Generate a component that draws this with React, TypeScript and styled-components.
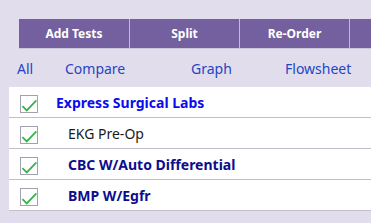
import React from "react";
import styled, { createGlobalStyle } from "styled-components";

const GlobalStyle = createGlobalStyle`
  html, body {
    margin: 0;
    padding: 0;
    background: #e2ddec;
    font-family: "Noto Sans", "Open Sans", sans-serif;
    overflow: hidden;
  }
`;

// last button runs off the edge, its label isn't visible
const actions = ["Add Tests", "Split", "Re-Order", ""];
const tabs = [
  { label: "All", width: 48 },
  { label: "Compare", width: 126 },
  { label: "Graph", width: 94 },
  { label: "Flowsheet", width: 100 },
];

type Item = { name: string; kind: "group" | "plain" | "panel" };

const items: Item[] = [
  { name: "Express Surgical Labs", kind: "group" },
  { name: "EKG Pre-Op", kind: "plain" },
  { name: "CBC W/Auto Differential", kind: "panel" },
  { name: "BMP W/Egfr", kind: "panel" },
];

const Check = () => (
  <CheckBox>
    <svg width="16" height="16" viewBox="0 0 16 16">
      <path
        d="M1.4 10.2 L5.8 14.4 L15.4 4.4"
        fill="none"
        stroke="#34b548"
        strokeWidth="1.8"
      />
    </svg>
  </CheckBox>
);

const App = () => {
  return (
    <Page>
      <GlobalStyle />
      <Toolbar>
        {actions.map((a, i) => (
          <ToolButton key={i}>{a}</ToolButton>
        ))}
      </Toolbar>
      <Tabs>
        {tabs.map((t) => (
          <Tab key={t.label} $width={t.width}>
            {t.label}
          </Tab>
        ))}
      </Tabs>
      <List>
        {items.map((it) => (
          <Row key={it.name}>
            <Check />
            <ItemName $kind={it.kind}>{it.name}</ItemName>
          </Row>
        ))}
      </List>
    </Page>
  );
};

const Page = styled.div`
  width: 371px;
  height: 223px;
  padding-top: 19px;
  box-sizing: border-box;
`;

const Toolbar = styled.div`
  display: flex;
  margin-left: 19px;
  height: 29px;
  background: #745f9f;
  border-bottom: 1px solid #cdc5dc;
`;

const ToolButton = styled.div`
  flex: 0 0 110px;
  display: flex;
  align-items: center;
  justify-content: center;
  color: #ffffff;
  font-size: 12px;
  font-weight: 700;
  border-right: 1px solid #c4b9d6;
  box-sizing: border-box;
  white-space: nowrap;
  &:first-child {
    flex-basis: 111px;
  }
`;

const Tabs = styled.div`
  display: flex;
  height: 38px;
  align-items: center;
  padding-left: 17px;
  padding-top: 1px;
  box-sizing: border-box;
`;

const Tab = styled.div<{ $width: number }>`
  flex: 0 0 ${(p) => p.$width}px;
  color: #2446c4;
  font-size: 14px;
  white-space: nowrap;
`;

const List = styled.div`
  margin-left: 9px;
  background: #ffffff;
`;

const Row = styled.div`
  display: flex;
  align-items: center;
  height: 30px;
  border-bottom: 1px solid #c2bfcc;
`;

const CheckBox = styled.div`
  width: 16px;
  height: 16px;
  margin-left: 11px;
  border: 1px solid #a3a1ab;
  display: flex;
  margin-top: 4px;
`;

const ItemName = styled.div<{ $kind: Item["kind"] }>`
  margin-left: ${(p) => (p.$kind === "group" ? 18 : 30)}px;
  font-size: 14px;
  white-space: nowrap;
  font-weight: ${(p) => (p.$kind === "plain" ? 400 : 700)};
  color: ${(p) =>
    p.$kind === "group" ? "#0b0bf0" : p.$kind === "panel" ? "#0d0d8e" : "#1a1a1a"};
`;

export default App;
